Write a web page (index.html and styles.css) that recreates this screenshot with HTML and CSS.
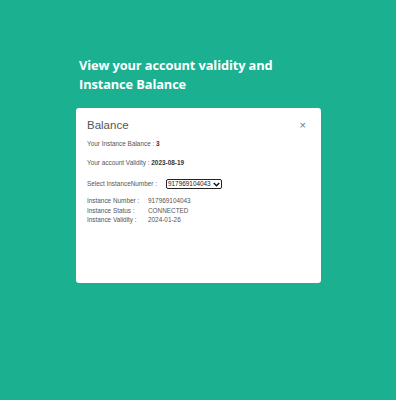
FILE: index.html
```html
<!DOCTYPE html>
<html>
<head>
<meta charset="utf-8">
<link rel="stylesheet" href="styles.css">
</head>
<body>
<div class="page">
  <h1 class="title">View your account validity and<br>Instance Balance</h1>
  <div class="card">
    <div class="card-head">
      <span class="card-title">Balance</span>
      <span class="close">×</span>
    </div>
    <p class="line l1">Your Instance Balance : <b>3</b></p>
    <p class="line l2">Your account Validity : <b>2023-08-19</b></p>
    <div class="line sel-row">
      <span class="sel-label">Select InstanceNumber :</span>
      <span class="sel">917969104043<svg class="chev" width="7" height="5" viewBox="0 0 7 5"><path d="M0.8 1 L3.5 3.8 L6.2 1" fill="none" stroke="#111" stroke-width="1.4"/></svg></span>
    </div>
    <div class="info">
      <div class="irow"><span class="ik">Instance Number :</span><span>917969104043</span></div>
      <div class="irow"><span class="ik">Instance Status :</span><span>CONNECTED</span></div>
      <div class="irow"><span class="ik">Instance Validity :</span><span>2024-01-26</span></div>
    </div>
  </div>
</div>
</body>
</html>
```
FILE: styles.css
```css
html, body {
  margin: 0;
  padding: 0;
  background: #1bb190;
}
.page {
  width: 396px;
  height: 400px;
  padding: 56px 0 0 76px;
  box-sizing: border-box;
}
.title {
  margin: 0 0 14px 3px;
  font-family: "Open Sans", sans-serif;
  font-weight: 700;
  font-size: 12.8px;
  line-height: 19px;
  color: #fff;
  letter-spacing: -0.1px;
}
.card {
  width: 245px;
  height: 175px;
  background: #fff;
  border-radius: 3px;
  box-sizing: border-box;
  padding: 10px 11px 0 11px;
  font-family: "Liberation Sans", Arial, sans-serif;
  color: #555;
}
.card-head {
  display: flex;
  justify-content: space-between;
  align-items: center;
  height: 14px;
}
.card-title {
  font-size: 11.5px;
  color: #555;
}
.close {
  font-size: 11px;
  color: #777;
  margin-right: 4px;
}
.line {
  margin: 0;
  font-size: 6.4px;
  line-height: 8px;
}
.line b { color: #333; }
.l1 { margin-top: 8px; }
.l2 { margin-top: 11px; }
.sel-row {
  margin-top: 12px;
  display: flex;
  align-items: center;
}
.sel-label { width: 79px; }
.sel {
  display: inline-flex;
  align-items: center;
  gap: 2px;
  border: 1px solid #222;
  border-radius: 2px;
  padding: 0 1px 0 1px;
  height: 8px;
  font-size: 6.4px;
  color: #222;
}
.info {
  margin-top: 7px;
  font-size: 6.4px;
  line-height: 9.5px;
}
.irow { display: flex; }
.ik { width: 61px; }
```
